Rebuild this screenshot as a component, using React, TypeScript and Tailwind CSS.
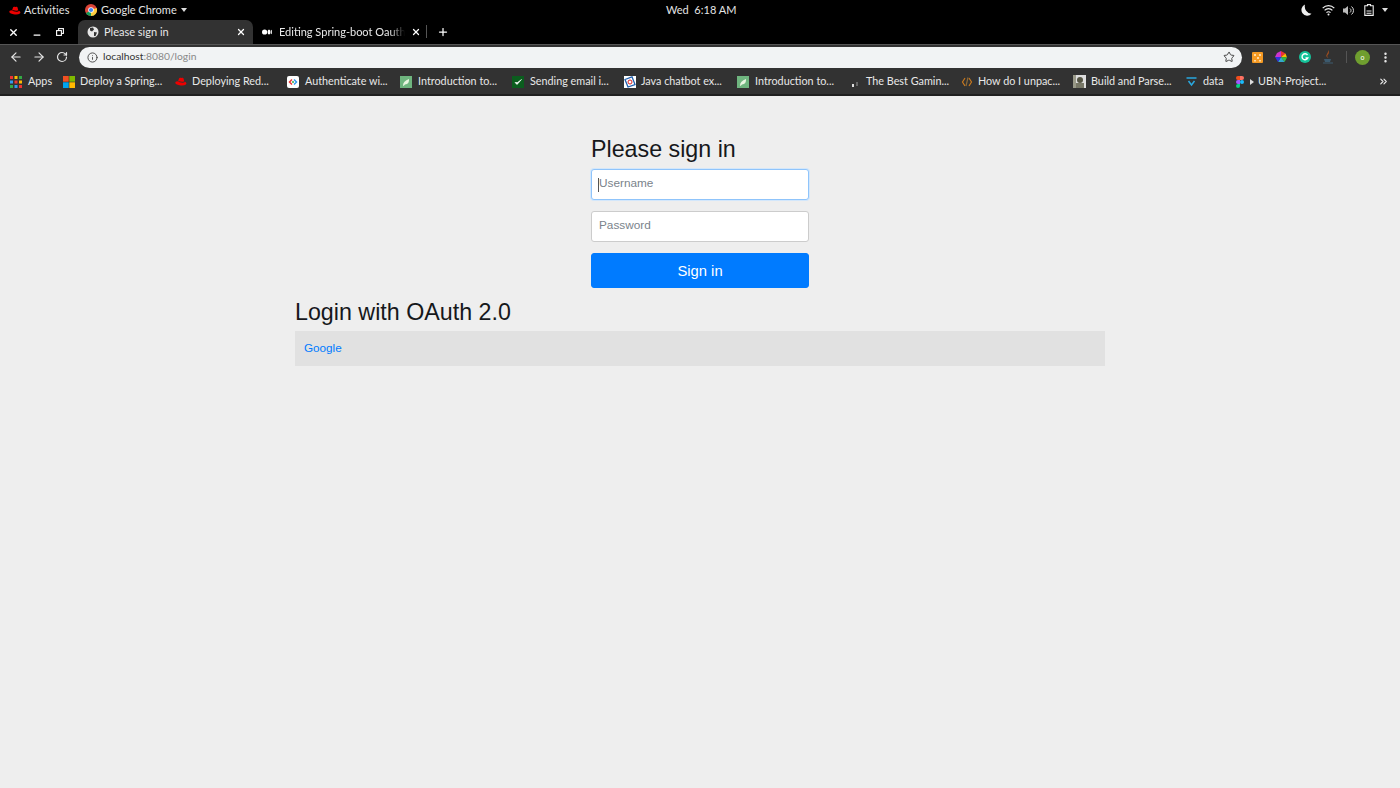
import React from "react";
import { ArrowLeft, ArrowRight, RotateCw, Info, Star, X, Plus, Minus, ChevronsRight, EllipsisVertical } from "lucide-react";

const RedHat = ({ s = 13 }: { s?: number }) => (
  <svg width={s} height={s * 0.75} viewBox="0 0 16 12">
    <path d="M4 6 L5.5 1.5 Q6 .5 7.5 1 Q8.5 1.4 9.5 1 Q11 .5 11.4 2 L12.3 5.5 Q10 6.5 7.5 6 Q5 5.6 4 6Z" fill="#e00" />
    <path d="M3.2 5.6 Q.3 6.2 .3 7.6 Q.5 10 6 11 Q12 12 14.5 10 Q16.5 8 13 6 Q13.5 7.5 10 7.5 Q6 7.4 3.2 5.6Z" fill="#e00" />
  </svg>
);

const Leaf = () => (
  <svg width="12" height="12" viewBox="0 0 12 12">
    <rect width="12" height="12" fill="#6fb57f" />
    <path d="M3 9.5 Q3 5 9 3 Q9.5 8 5 8.5 L3.5 10Z" fill="#e8f5e0" />
  </svg>
);

const marks: Record<string, React.ReactNode> = {
  apps: (
    <svg width="12" height="12" viewBox="0 0 12 12">
      {[
        ["#e33", "#fb0", "#3a4"],
        ["#39e", "#e33", "#fb0"],
        ["#3a4", "#39e", "#e33"],
      ].map((row, y) =>
        row.map((c, x) => <rect key={`${x}${y}`} x={x * 4.5} y={y * 4.5} width="3" height="3" fill={c} />)
      )}
    </svg>
  ),
  ms: (
    <svg width="12" height="12" viewBox="0 0 12 12">
      <rect width="5.7" height="5.7" fill="#f25022" />
      <rect x="6.3" width="5.7" height="5.7" fill="#7fba00" />
      <rect y="6.3" width="5.7" height="5.7" fill="#00a4ef" />
      <rect x="6.3" y="6.3" width="5.7" height="5.7" fill="#ffb900" />
    </svg>
  ),
  hat: <RedHat s={12} />,
  auth: (
    <svg width="12" height="12" viewBox="0 0 12 12">
      <rect width="12" height="12" rx="2" fill="#fff" />
      <path d="M5 3.5 L2.5 6 L5 8.5" stroke="#e33" strokeWidth="1.5" fill="none" />
      <path d="M7 3.5 L9.5 6 L7 8.5" stroke="#39e" strokeWidth="1.5" fill="none" />
      <circle cx="6" cy="6" r="1" fill="#3a4" />
    </svg>
  ),
  leaf: <Leaf />,
  check: (
    <svg width="12" height="12" viewBox="0 0 12 12">
      <rect width="12" height="12" fill="#0b5d1e" />
      <path d="M3 6.5 L5 8.5 L9.5 3.5 L5.5 6.5Z" fill="#fff" stroke="#fff" strokeWidth=".6" />
    </svg>
  ),
  java: (
    <svg width="12" height="12" viewBox="0 0 12 12">
      <rect width="12" height="12" fill="#fff" />
      <path d="M1 3.5 L8 .8 L11 8.5 L4 11Z" fill="none" stroke="#1f5fae" strokeWidth="1.3" />
      <circle cx="6" cy="6" r="2" fill="none" stroke="#d22" strokeWidth="1" />
    </svg>
  ),
  game: (
    <svg width="12" height="12" viewBox="0 0 12 12">
      <rect x="2" y="8" width="2" height="3" fill="#ddd" />
      <rect x="6" y="6" width="2" height="4" fill="#666" />
    </svg>
  ),
  so: (
    <svg width="12" height="12" viewBox="0 0 12 12" fill="none" strokeWidth="1.2">
      <path d="M4 2 L1.5 6 L4 10" stroke="#c8781e" />
      <path d="M8 2 L10.5 6 L8 10" stroke="#c8781e" />
      <path d="M7 1.5 L5 10" stroke="#8a6a3a" />
    </svg>
  ),
  build: (
    <svg width="13" height="13" viewBox="0 0 13 13">
      <rect width="13" height="13" fill="#ddd" />
      <circle cx="7" cy="5" r="3" fill="#554" />
      <rect x="2" y="8" width="9" height="5" fill="#776" />
      <rect x="0" y="0" width="3" height="13" fill="#998" />
    </svg>
  ),
  data: (
    <svg width="11" height="11" viewBox="0 0 11 11" fill="none" stroke="#29a9e1" strokeWidth="1.5">
      <path d="M.5 2 H10.5" />
      <path d="M2.5 5 L5.5 9 L8.5 5" />
    </svg>
  ),
  figma: (
    <svg width="8" height="12" viewBox="0 0 8 12">
      <path d="M4 0 H2 a2 2 0 0 0 0 4 H4Z" fill="#f24e1e" />
      <path d="M4 0 H6 a2 2 0 0 1 0 4 H4Z" fill="#ff7262" />
      <path d="M4 4 H2 a2 2 0 0 0 0 4 H4Z" fill="#a259ff" />
      <circle cx="6" cy="6" r="2" fill="#1abcfe" />
      <path d="M4 8 H2 a2 2 0 1 0 2 2Z" fill="#0acf83" />
    </svg>
  ),
};

const bookmarks = [
  { m: "apps", t: "Apps", cls: "w-[63px] pl-[10px] gap-[6px]" },
  { m: "ms", t: "Deploy a Spring...", cls: "w-[112px] gap-[5px]" },
  { m: "hat", t: "Deploying Red...", cls: "w-[112px] gap-[5px]" },
  { m: "auth", t: "Authenticate wi...", cls: "w-[113px] gap-[6px]" },
  { m: "leaf", t: "Introduction to...", cls: "w-[112px] gap-[6px]" },
  { m: "check", t: "Sending email i...", cls: "w-[112px] gap-[6px]" },
  { m: "java", t: "Java chatbot ex...", cls: "w-[113px] gap-[5px]" },
  { m: "leaf", t: "Introduction to...", cls: "w-[113px] gap-[6px]" },
  { m: "game", t: "The Best Gamin...", cls: "w-[111px] gap-[4px]" },
  { m: "so", t: "How do I unpac...", cls: "w-[112px] gap-[5px]" },
  { m: "build", t: "Build and Parse...", cls: "w-[113px] gap-[5px]" },
  { m: "data", t: "data", cls: "w-[50px] gap-[6px]" },
];

function TopBar() {
  return (
    <div className="h-[20px] flex items-center text-[11px] text-[#e4e4e4] relative">
      <div className="flex items-center pl-[9px] w-[85px] gap-[3px]">
        <RedHat s={12} />
        <span className="tracking-[0.1px]">Activities</span>
      </div>
      <div className="flex items-center gap-[4px]">
        <svg width="12" height="12" viewBox="0 0 12 12">
          <circle cx="6" cy="6" r="6" fill="#db4437" />
          <path d="M6 6 L11.2 9 A6 6 0 0 1 1 9.3Z" fill="#0f9d58" />
          <path d="M6 6 L6 12 A6 6 0 0 0 11.7 4Z" fill="#ffcd40" />
          <circle cx="6" cy="6" r="2.8" fill="#fff" />
          <circle cx="6" cy="6" r="2.1" fill="#4285f4" />
        </svg>
        <span>Google Chrome</span>
        <span className="w-0 h-0 border-x-[3.5px] border-x-transparent border-t-[4px] border-t-[#ddd]" />
      </div>
      <div className="flex-1" />
      <div className="absolute left-[666px] top-[2px] whitespace-pre">Wed  6:18 AM</div>
      <div className="flex items-center pr-[12px] gap-[8px] text-white">
        <svg width="11" height="12" viewBox="0 0 11 12">
          <path d="M4 .5 A5.8 5.8 0 1 0 10.5 9.8 A7.5 7.5 0 0 1 4 .5Z" fill="#eee" />
        </svg>
        <svg width="13" height="11" viewBox="0 0 13 11" fill="none" stroke="#eee" strokeWidth="1.2" className="ml-[2px]">
          <path d="M.7 3.2 A8 8 0 0 1 12.3 3.2" />
          <path d="M2.6 5.4 A5.3 5.3 0 0 1 10.4 5.4" />
          <path d="M4.5 7.6 A2.8 2.8 0 0 1 8.5 7.6" />
          <circle cx="6.5" cy="9.6" r="1" fill="#eee" stroke="none" />
        </svg>
        <svg width="12" height="11" viewBox="0 0 12 11" fill="none" stroke="#ddd">
          <path d="M0 3.5 H2 L5 1 V10 L2 7.5 H0Z" fill="#bbb" stroke="none" />
          <path d="M7 3.5 A2.5 2.5 0 0 1 7 7.5" />
          <path d="M8.5 1.5 A5 5 0 0 1 8.5 9.5" />
        </svg>
        <svg width="10" height="12" viewBox="0 0 10 12" fill="none" stroke="#eee" strokeWidth="1.1" className="ml-[1px]">
          <path d="M3.5 .6 H6.5 V1.8 H9.2 V11.4 H.8 V1.8 H3.5Z" />
          <path d="M2.5 7 H7.5 M2.5 9.2 H7.5" />
        </svg>
        <span className="w-0 h-0 border-x-[3.5px] border-x-transparent border-t-[4px] border-t-[#ddd]" />
      </div>
    </div>
  );
}

function TabStrip() {
  return (
    <div className="h-[25px] flex items-end text-[11px] text-[#e8e8e8] border-b border-b-[#555] box-border">
      <div className="w-[78px] h-full flex items-center pl-[8px] text-white">
        <X size={11} strokeWidth={3} />
        <Minus size={10} strokeWidth={3} className="ml-[13px] mt-[5px]" />
        <svg width="8" height="8" viewBox="0 0 8 8" className="ml-[14px]" fill="none" stroke="#fff" strokeWidth="1.1">
          <rect x="2.6" y=".6" width="4.8" height="4.8" />
          <rect x=".6" y="2.6" width="4.8" height="4.8" fill="#000" />
        </svg>
      </div>
      <div className="w-[175px] h-full bg-[#323232] rounded-t-[7px] flex items-center pl-[9px] pr-[7px]">
        <svg width="12" height="12" viewBox="0 0 12 12">
          <circle cx="6" cy="6" r="5.5" fill="#e6e6e6" />
          <path d="M3 2 L6 1.5 L7 3.5 L5 5.5 L3 4.5Z M7 6 L10 6.5 L8.5 10 L7 10Z" fill="#323232" />
        </svg>
        <span className="ml-[5px] flex-1">Please sign in</span>
        <X size={10} strokeWidth={3} className="text-white" />
      </div>
      <div className="w-[174px] h-full flex items-center pl-[9px] pr-[5px] relative">
        <svg width="10" height="6" viewBox="0 0 10 6" fill="#fff">
          <circle cx="2.6" cy="3" r="2.6" />
          <ellipse cx="7" cy="3" rx="1.4" ry="2.5" />
          <ellipse cx="9.3" cy="3" rx=".6" ry="2.2" />
        </svg>
        <span className="ml-[7px] w-[126px] whitespace-nowrap overflow-hidden [mask-image:linear-gradient(to_right,black_88%,transparent)]">Editing Spring-boot Oauth2</span>
        <X size={10} strokeWidth={3} className="text-white ml-[6px]" />
        <span className="absolute right-0 top-[5px] h-[13px] w-px bg-[#555]" />
      </div>
      <div className="h-full flex items-center pl-[10px]">
        <Plus size={12} strokeWidth={2.5} className="text-white" />
      </div>
    </div>
  );
}

function Toolbar() {
  return (
    <div className="h-[24px] bg-[#323232] flex items-center text-[#e6e6e6]">
      <div className="flex items-center pl-[9px] w-[79px]">
        <ArrowLeft size={14} strokeWidth={2} />
        <ArrowRight size={14} strokeWidth={2} className="ml-[9px]" />
        <RotateCw size={12} strokeWidth={2.4} className="ml-[10px]" />
      </div>
      <div className="w-[1163px] h-[21px] bg-[#f1f3f4] rounded-full flex items-center pl-[8px] pr-[7px] text-[10.3px]">
        <Info size={11} className="text-[#444]" />
        <span className="ml-[5px] text-[#333]">localhost</span>
        <span className="text-[#888]">:8080/login</span>
        <span className="flex-1" />
        <Star size={12} className="text-[#444]" />
      </div>
      <div className="flex items-center pl-[10px]">
        <svg width="11" height="11" viewBox="0 0 11 11">
          <rect width="11" height="11" rx="1" fill="#f59a23" />
          <path d="M2 2 H4 V4 H2Z M7 2 H9 V4 H7Z M5 5 H7 V7 H5Z M2 8 H4 V9.5 H2Z M7 8 H9 V9.5 H7Z" fill="#ffd9a0" />
        </svg>
        <svg width="12" height="12" viewBox="0 0 12 12" className="ml-[12px]">
          <path d="M6 0 L10.5 2.5 L6 6Z" fill="#e33" />
          <path d="M10.5 2.5 L12 6.5 L6 6Z" fill="#fb0" />
          <path d="M12 6.5 L9.5 11 L6 6Z" fill="#3b4" />
          <path d="M9.5 11 L3 11 L6 6Z" fill="#3ac" />
          <path d="M3 11 L0 6 L6 6Z" fill="#33d" />
          <path d="M0 6 L2 2 L6 0 L6 6Z" fill="#c3c" />
        </svg>
        <svg width="12" height="12" viewBox="0 0 12 12" className="ml-[12px]">
          <circle cx="6" cy="6" r="6" fill="#15c39a" />
          <path d="M8.5 4 A3 3 0 1 0 8.8 7 H6.5" fill="none" stroke="#fff" strokeWidth="1.4" />
        </svg>
        <svg width="12" height="14" viewBox="0 0 12 14" className="ml-[11px]">
          <path d="M6 0 Q8 3 5.5 5 Q4.5 6.5 6.5 8 Q3 6.5 5 4 Q6.5 2.5 6 0Z" fill="#a8501e" />
          <path d="M2 9 H9 L8 12 H3Z" fill="#3c5a6e" />
          <path d="M1 13 H11" stroke="#3c5a6e" />
        </svg>
        <span className="ml-[12px] w-px h-[12px] bg-[#555]" />
        <span className="ml-[8px] w-[15px] h-[15px] rounded-full bg-[#6f9e2f] text-[7px] flex items-center justify-center text-white">o</span>
        <EllipsisVertical size={13} strokeWidth={2.5} className="ml-[9px] text-[#eee]" />
      </div>
    </div>
  );
}

function BookmarkBar() {
  return (
    <div className="h-[25px] bg-[#323232] border-b-[2px] border-b-[#1f1f1f] box-content flex items-center text-[10.8px] text-[#e8e8e8]">
      {bookmarks.map((b, i) => (
        <div key={i} className={`flex items-center shrink-0 whitespace-nowrap ${b.cls}`}>
          {marks[b.m]}
          <span>{b.t}</span>
        </div>
      ))}
      <div className="flex items-center whitespace-nowrap">
        {marks.figma}
        <span className="ml-[6px] w-0 h-0 border-y-[3.5px] border-y-transparent border-l-[4px] border-l-[#ddd]" />
        <span className="ml-[4px]">UBN-Project...</span>
      </div>
      <div className="flex-1" />
      <ChevronsRight size={11} strokeWidth={2.5} className="mr-[11px]" />
    </div>
  );
}

export default function App() {
  return (
    <div className="h-[788px] w-[1400px] overflow-hidden flex flex-col bg-[#eeeeee]">
      <div className="bg-black font-['Lato','Open_Sans',sans-serif] shrink-0">
        <TopBar />
        <TabStrip />
        <Toolbar />
        <BookmarkBar />
      </div>
      <main className="flex-1 font-['Liberation_Sans',Arial,sans-serif] text-[#16181b]">
        <div className="w-[218px] mx-auto pt-[39px]">
          <h2 className="text-[23.25px] leading-[29px] mb-[5px]">Please sign in</h2>
          <div className="h-[31px] bg-white border border-[#8fc4fb] rounded-[3px] ring-[1px] ring-[#d3e7fb] flex items-center pl-[6px] pb-[1px] text-[11.8px] text-[#7a838b]">
            <span className="w-px h-[14px] bg-[#555] mt-[1px]" />
            <span>Username</span>
          </div>
          <div className="h-[31px] mt-[11px] bg-white border border-[#cccccc] rounded-[3px] flex items-center pl-[7px] pb-[1px] text-[11.8px] text-[#7a838b]">
            Password
          </div>
          <button className="block w-full h-[35px] mt-[11px] pt-[1px] bg-[#007bff] border border-[#007bff] rounded-[3px] text-white text-[14.8px]">
            Sign in
          </button>
        </div>
        <div className="w-[810px] mx-auto mt-[10px]">
          <h2 className="text-[23.25px] leading-[29px] mb-[4px]">Login with OAuth 2.0</h2>
          <div className="h-[35px] bg-[#e1e1e1] flex items-center pl-[9px] pb-[1px] text-[11.7px] text-[#007bff]">Google</div>
        </div>
      </main>
    </div>
  );
}
